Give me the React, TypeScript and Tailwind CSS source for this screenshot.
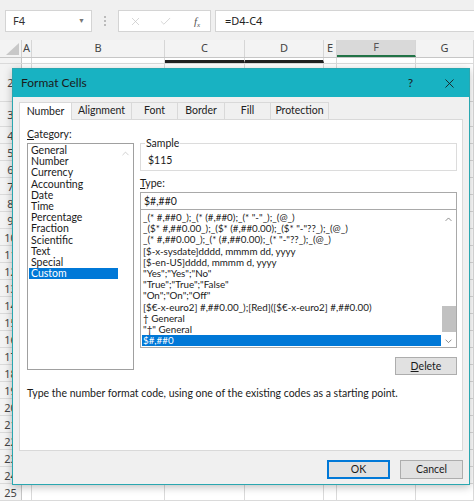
import { X, Check, ChevronUp, ChevronDown } from "lucide-react";

const font = "font-['Segoe_UI','Noto_Sans','Open_Sans',sans-serif]";
const dialogFont = "font-['Lato','Noto_Sans',sans-serif]";

const COLS: { label: string; w: string; selected?: boolean }[] = [
  { label: "A", w: "w-[10px]" },
  { label: "B", w: "w-[133px]" },
  { label: "C", w: "w-[80px]" },
  { label: "D", w: "w-[79px]" },
  { label: "E", w: "w-[13px]" },
  { label: "F", w: "w-[79px]", selected: true },
  { label: "G", w: "flex-1" },
];

const ROWS: { n: number; h: string }[] = [
  { n: 1, h: "h-[6px]" },
  { n: 2, h: "h-[38px]" },
  { n: 3, h: "h-[25px]" },
  ...Array.from({ length: 22 }, (_, i) => ({ n: i + 4, h: "h-[17px]" })),
];

const CATEGORIES = [
  "General",
  "Number",
  "Currency",
  "Accounting",
  "Date",
  "Time",
  "Percentage",
  "Fraction",
  "Scientific",
  "Text",
  "Special",
  "Custom",
];

const CODES = [
  '_(* #,##0_);_(* (#,##0);_(* "-"_);_(@_)',
  '_($* #,##0.00_);_($* (#,##0.00);_($* "-"??_);_(@_)',
  '_(* #,##0.00_);_(* (#,##0.00);_(* "-"??_);_(@_)',
  "[$-x-sysdate]dddd, mmmm dd, yyyy",
  "[$-en-US]dddd, mmmm d, yyyy",
  '"Yes";"Yes";"No"',
  '"True";"True";"False"',
  '"On";"On";"Off"',
  "[$€-x-euro2] #,##0.00_);[Red]([$€-x-euro2] #,##0.00)",
  "† General",
  '"†" General',
  "$#,##0",
];

const TABS = [
  { label: "Number", w: "w-[52px]" },
  { label: "Alignment", w: "w-[60px]" },
  { label: "Font", w: "w-[46px]" },
  { label: "Border", w: "w-[47px]" },
  { label: "Fill", w: "w-[46px]" },
  { label: "Protection", w: "w-[59px]" },
];

function Sheet() {
  return (
    <div className="flex flex-col">
      {/* formula bar */}
      <div className="flex h-[40px] items-start bg-[#f0f0f0] pt-[10px]">
        <div className="ml-[5px] flex h-[22px] w-[87px] items-center justify-between border border-[#d4d4d4] bg-white pl-[7px] pr-[6px] text-[11px] text-[#333]">
          <span>F4</span>
          <span className="text-[7px] text-[#777]">▼</span>
        </div>
        <div className="ml-[12px] mt-[6px] flex h-[10px] flex-col justify-between">
          <span className="block h-[2px] w-[2px] bg-[#bbb]" />
          <span className="block h-[2px] w-[2px] bg-[#bbb]" />
          <span className="block h-[2px] w-[2px] bg-[#bbb]" />
        </div>
        <div className="ml-[12px] flex h-[22px] w-[93px] items-center border border-[#d4d4d4] bg-white pl-[10px] text-[#c4c4c4]">
          <X size={13} strokeWidth={1.3} />
          <Check size={13} strokeWidth={1.3} className="ml-[17px]" />
          <span className="ml-[22px] font-['Liberation_Serif',serif] text-[11px] italic text-[#555]">
            f<sub className="text-[7px]">x</sub>
          </span>
        </div>
        <div className="ml-[4px] flex h-[22px] flex-1 items-center border border-r-0 border-[#d4d4d4] bg-white pl-[9px] text-[11px] text-[#222]">
          =D4-C4
        </div>
      </div>
      {/* column headers */}
      <div className="flex h-[18px] border-b border-[#c6c6c6] bg-[#f3f3f3] text-[11px] text-[#444]">
        <div className="flex w-[22px] items-end justify-end border-r border-[#d0d0d0] pb-[2px] pr-[2px]">
          <svg width="13" height="12" viewBox="0 0 13 12">
            <polygon points="13,0 13,12 0,12" fill="#c8c8c8" />
          </svg>
        </div>
        {COLS.map((c) => (
          <div
            key={c.label}
            className={`${c.w} flex items-center justify-center border-r border-[#d6d6d6] ${
              c.selected ? "border-b-2 border-b-[#217346] bg-[#d9d9d9] text-[#555]" : ""
            }`}
          >
            {c.label}
          </div>
        ))}
      </div>
      {/* rows */}
      {ROWS.map((r) => (
        <div key={r.n} className={`flex ${r.h} overflow-hidden border-b border-[#dadada] bg-white`}>
          <div className="flex w-[22px] items-center justify-center border-r border-[#c6c6c6] bg-[#f3f3f3] text-[11px] leading-none text-[#444]">
            {r.n > 1 ? r.n : ""}
          </div>
          {COLS.map((c) => (
            <div
              key={c.label}
              className={`${c.w} border-r border-[#dadada] ${
                r.n === 1 && (c.label === "C" || c.label === "D") ? "border-b-[3px] border-b-[#222]" : ""
              }`}
            />
          ))}
        </div>
      ))}
    </div>
  );
}

function Dialog() {
  return (
    <div
      className={`absolute left-[12px] top-[68px] flex h-[417px] w-[458px] flex-col border border-[#2aa7b0] bg-[#f0f0f0] shadow-[0_2px_8px_rgba(0,0,0,0.25)] ${dialogFont}`}
    >
      {/* title bar */}
      <div className="flex h-[28px] shrink-0 items-center bg-[#18b2c2] pl-[8px] text-[#1a1a1a]">
        <span className="text-[12px]">Format Cells</span>
        <span className="ml-auto mr-[29px] text-[12px]">?</span>
        <X size={15} strokeWidth={1.4} className="mr-[12px]" />
      </div>

      {/* tabs */}
      <div className="ml-[6px] mt-[5px] flex h-[17px] items-end text-[10.5px] text-[#222]">
        {TABS.map((t, i) => (
          <div
            key={t.label}
            className={`${t.w} flex items-center justify-center border-l border-t border-[#d9d9d9] ${
              i === TABS.length - 1 ? "border-r" : ""
            } ${i === 0 ? "relative z-10 -mb-px h-[18px] bg-white" : "h-[17px] bg-[#f0f0f0]"}`}
          >
            {t.label}
          </div>
        ))}
      </div>

      {/* panel */}
      <div className="mx-[6px] flex h-[332px] flex-col border border-[#d9d9d9] bg-white text-[10.5px] leading-none text-[#1a1a1a]">
        <div className="mt-[9px] flex">
          {/* category */}
          <div className="ml-[7px] flex w-[107px] flex-col">
            <span className="h-[14px]">
              <span className="underline">C</span>ategory:
            </span>
            <div className="flex h-[227px] border border-[#a0a0a0]">
              <div className="flex flex-1 flex-col pl-px pt-px">
                {CATEGORIES.map((c) => (
                  <div
                    key={c}
                    className={`h-[11.2px] pl-[2px] text-[10.5px] leading-[11.2px] ${
                      c === "Custom" ? "bg-[#0078d7] text-white" : ""
                    }`}
                  >
                    {c}
                  </div>
                ))}
              </div>
              <div className="flex w-[15px] justify-center pt-[4px] text-[#c0c0c0]">
                <ChevronUp size={11} strokeWidth={1.6} />
              </div>
            </div>
          </div>

          {/* type */}
          <div className="ml-[6px] flex w-[317px] flex-col">
            <div className="relative mt-[14px] h-[28px] border border-[#dcdcdc] pl-[7px]">
              <span className="absolute left-[4px] top-[-6px] bg-white px-px">Sample</span>
              <div className="pt-[11px]">$115</div>
            </div>
            <span className="mt-[7px] h-[11px]">
              <span className="underline">T</span>ype:
            </span>
            <div className="mt-[3px] flex h-[18px] items-center border border-[#a9a9a9] pl-[3px]">$#,##0</div>
            <div className="-mt-px flex h-[139px] border border-[#a9a9a9]">
              <div className="flex flex-1 flex-col pl-px pt-[2px]">
                {CODES.map((c, i) => (
                  <div
                    key={c}
                    className={`h-[11.2px] whitespace-nowrap pl-px text-[9.8px] leading-[11.2px] ${
                      i === CODES.length - 1 ? "bg-[#0078d7] text-white" : ""
                    }`}
                  >
                    {c}
                  </div>
                ))}
              </div>
              <div className="flex w-[15px] flex-col items-center text-[#606060]">
                <ChevronUp size={11} strokeWidth={1.6} className="mt-[4px]" />
                <div className="mt-[81px] h-[28px] w-[14px] bg-[#c1c1c1]" />
                <ChevronDown size={11} strokeWidth={1.6} className="mt-[4px]" />
              </div>
            </div>
            <div className="mt-[9px] flex justify-end">
              <button
                type="button"
                className="flex h-[18px] w-[62px] items-center justify-center border border-[#adadad] bg-[#e1e1e1]"
              >
                <span className="underline">D</span>elete
              </button>
            </div>
          </div>
        </div>
        <p className="ml-[7px] mt-[13px]">
          Type the number format code, using one of the existing codes as a starting point.
        </p>
      </div>

      {/* buttons */}
      <div className="mr-[6px] mt-[9px] flex justify-end gap-[10px] text-[10.5px] text-[#1a1a1a]">
        <button
          type="button"
          className="flex h-[19px] w-[63px] items-center justify-center border-2 border-[#0078d7] bg-[#e1e1e1]"
        >
          OK
        </button>
        <button
          type="button"
          className="flex h-[19px] w-[63px] items-center justify-center border border-[#adadad] bg-[#e1e1e1]"
        >
          Cancel
        </button>
      </div>
    </div>
  );
}

export default function App() {
  return (
    <div className={`relative h-[504px] w-[474px] overflow-hidden bg-white ${font}`}>
      <Sheet />
      <Dialog />
    </div>
  );
}
